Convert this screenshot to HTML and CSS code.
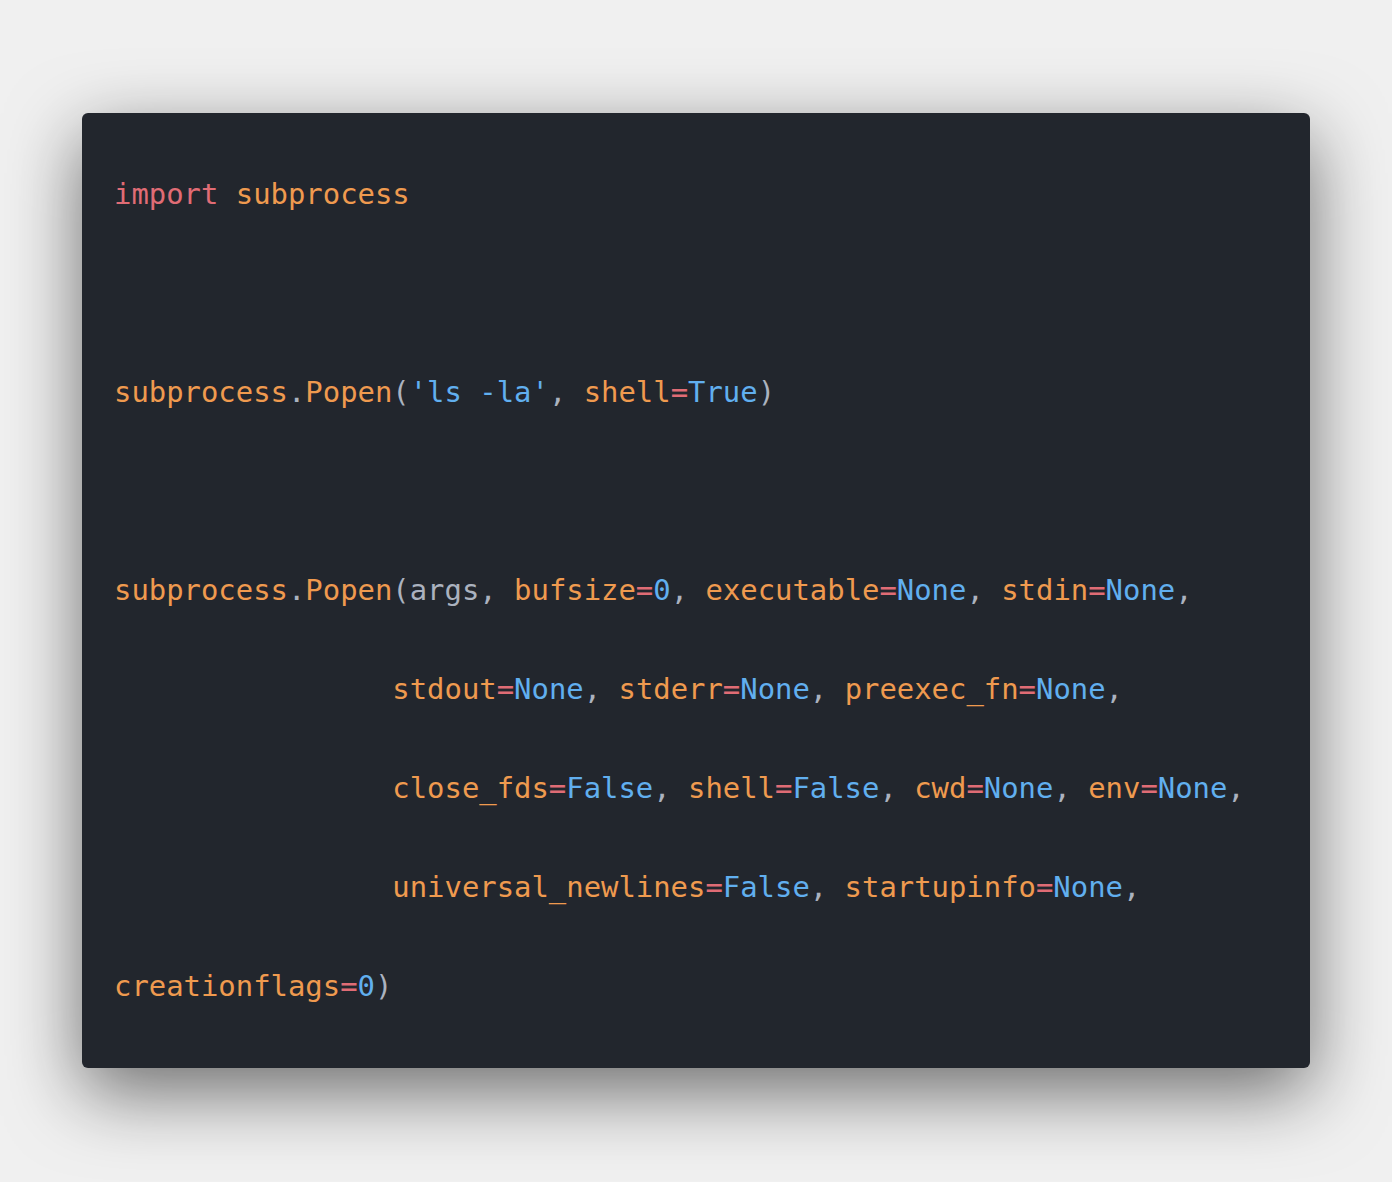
FILE: index.html
```html
<!DOCTYPE html>
<html lang="en">
<head>
<meta charset="utf-8">
<title>subprocess</title>
<link rel="stylesheet" href="styles.css">
</head>
<body>
<main class="stage">
<div class="card">
<pre class="code"><span class="kw">import</span> <span class="id">subprocess</span>

<span class="id">subprocess</span><span class="p">.</span><span class="id">Popen</span><span class="p">(</span><span class="v">'ls -la'</span><span class="p">,</span> <span class="id">shell</span><span class="op">=</span><span class="v">True</span><span class="p">)</span>

<span class="id">subprocess</span><span class="p">.</span><span class="id">Popen</span><span class="p">(args,</span> <span class="id">bufsize</span><span class="op">=</span><span class="v">0</span><span class="p">,</span> <span class="id">executable</span><span class="op">=</span><span class="v">None</span><span class="p">,</span> <span class="id">stdin</span><span class="op">=</span><span class="v">None</span><span class="p">,</span>
                <span class="id">stdout</span><span class="op">=</span><span class="v">None</span><span class="p">,</span> <span class="id">stderr</span><span class="op">=</span><span class="v">None</span><span class="p">,</span> <span class="id">preexec_fn</span><span class="op">=</span><span class="v">None</span><span class="p">,</span>
                <span class="id">close_fds</span><span class="op">=</span><span class="v">False</span><span class="p">,</span> <span class="id">shell</span><span class="op">=</span><span class="v">False</span><span class="p">,</span> <span class="id">cwd</span><span class="op">=</span><span class="v">None</span><span class="p">,</span> <span class="id">env</span><span class="op">=</span><span class="v">None</span><span class="p">,</span>
                <span class="id">universal_newlines</span><span class="op">=</span><span class="v">False</span><span class="p">,</span> <span class="id">startupinfo</span><span class="op">=</span><span class="v">None</span><span class="p">,</span>
<span class="id">creationflags</span><span class="op">=</span><span class="v">0</span><span class="p">)</span></pre>
</div>
</main>
</body>
</html>
```
FILE: styles.css
```css
html, body {
  margin: 0;
  padding: 0;
}
body {
  background: #f0f0f0;
  width: 1392px;
  height: 1182px;
  overflow: hidden;
}
.stage {
  padding: 113px 82px 114px 82px;
  display: flex;
}
.card {
  flex: 1;
  background: #22262d;
  border-radius: 6px;
  padding: 32px;
  box-shadow: 0 24px 74px rgba(0, 0, 0, 0.55);
}
.code {
  margin: 0;
  font-family: "DejaVu Sans Mono", "Liberation Mono", monospace;
  font-size: 28.9px;
  line-height: 99px;
  color: #abb2bf;
  white-space: pre;
}
.kw { color: #e06c75; }
.id { color: #ef9a4f; }
.v { color: #61afef; }
.op { color: #e06c75; }
.p { color: #abb2bf; }
```
